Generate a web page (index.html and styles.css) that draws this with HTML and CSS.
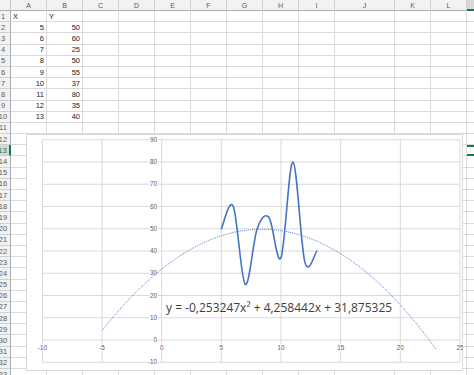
FILE: index.html
```html
<!DOCTYPE html>
<html lang="en">
<head>
  <meta charset="UTF-8" />
  <meta name="viewport" content="width=device-width, initial-scale=1.0"/>
  <title>Sheet1 - chart</title>
  <link rel="stylesheet" href="styles.css">
</head>
<body>
  <div class="sheet">
    <div class="grid" id="grid"></div>

    <div class="chart">
      <svg id="plot" width="437" height="237" viewBox="0 0 437 237">
        <g id="gridlines"></g>
        <g id="labels" class="axis-labels"></g>
        <path id="trend" class="trend" d=""></path>
        <path id="series" class="series" d=""></path>
        <text class="equation" x="140" y="178">y = -0,253247x² + 4,258442x + 31,875325</text>
      </svg>
    </div>
  </div>

  <script>
  const COLS = ["A", "B", "C", "D", "E", "F", "G", "H", "I", "J", "K", "L", "M"];
  const ROWS = 33;
  const data = [[5, 50], [6, 60], [7, 25], [8, 50], [9, 55], [10, 37], [11, 80], [12, 35], [13, 40]];

  // build the sheet cells
  const grid = document.getElementById("grid");
  let html = '<div class="corner"></div>';
  COLS.forEach(c => {
    html += `<div class="col-head${c === "M" ? " active" : ""}">${c}</div>`;
  });
  for (let r = 1; r <= ROWS; r++) {
    html += `<div class="row-head${r === 13 ? " active" : ""}">${r}</div>`;
    COLS.forEach(c => {
      let text = "";
      let cls = "cell";
      if (r === 1 && c === "A") text = "X";
      if (r === 1 && c === "B") text = "Y";
      if (r > 1 && r <= data.length + 1 && c === "A") { text = data[r - 2][0]; cls += " num"; }
      if (r > 1 && r <= data.length + 1 && c === "B") { text = data[r - 2][1]; cls += " num"; }
      if (r === 13 && c === "M") cls += " selected";
      html += `<div class="${cls}">${text}</div>`;
    });
  }
  grid.innerHTML = html;

  // chart scale (chart-local pixels)
  const px = x => 135.7 + 11.93 * x;
  const py = y => 206 - 2.225 * y;

  let lines = "";
  let labels = "";
  for (let x = -10; x <= 25; x += 5) {
    lines += `<line x1="${px(x)}" y1="${py(90)}" x2="${px(x)}" y2="${py(-10)}"/>`;
    labels += `<text x="${px(x)}" y="216" text-anchor="middle">${x}</text>`;
  }
  for (let y = -10; y <= 90; y += 10) {
    lines += `<line x1="${px(-10)}" y1="${py(y)}" x2="${px(25)}" y2="${py(y)}"/>`;
    labels += `<text x="131" y="${py(y) + 2.2}" text-anchor="end">${y}</text>`;
  }
  document.getElementById("gridlines").innerHTML = lines;
  document.getElementById("labels").innerHTML = labels;

  // polynomial trendline
  const trend = x => -0.253247 * x * x + 4.258442 * x + 31.875325;
  let t = "";
  for (let x = -5; x <= 23.001; x += 0.25) {
    t += (t ? " L" : "M") + px(x).toFixed(2) + " " + py(trend(x)).toFixed(2);
  }
  document.getElementById("trend").setAttribute("d", t);

  // smoothed series
  const pts = data.map(([x, y]) => [px(x), py(y)]);
  let d = `M${pts[0][0]} ${pts[0][1]}`;
  for (let i = 0; i < pts.length - 1; i++) {
    const p0 = pts[i - 1] || pts[i];
    const p1 = pts[i];
    const p2 = pts[i + 1];
    const p3 = pts[i + 2] || p2;
    const c1 = [p1[0] + (p2[0] - p0[0]) / 6, p1[1] + (p2[1] - p0[1]) / 6];
    const c2 = [p2[0] - (p3[0] - p1[0]) / 6, p2[1] - (p3[1] - p1[1]) / 6];
    d += ` C${c1[0].toFixed(2)} ${c1[1].toFixed(2)} ${c2[0].toFixed(2)} ${c2[1].toFixed(2)} ${p2[0].toFixed(2)} ${p2[1].toFixed(2)}`;
  }
  document.getElementById("series").setAttribute("d", d);
</script>
</body>
</html>
```

FILE: styles.css
```css
body {
    margin: 0;
    background: #ffffff;
    font-family: "Liberation Sans", Arial, sans-serif;
    overflow: hidden;
}

.sheet {
    position: relative;
    width: 474px;
    height: 375px;
    overflow: hidden;
}

.grid {
    display: grid;
    grid-template-columns: 11px repeat(9, 36px) 60px 36px 36px 60px;
    grid-template-rows: 11px;
    grid-auto-rows: 11.2px;
}

.corner,
.col-head,
.row-head {
    background: #f2f2f2;
    color: #5a5a5a;
    font-size: 7px;
    box-sizing: border-box;
}

.corner {
    border-right: 1px solid #c6c6c6;
    border-bottom: 1px solid #ababab;
}

.col-head {
    display: flex;
    align-items: center;
    justify-content: center;
    border-right: 1px solid #d0d0d0;
    border-bottom: 1px solid #ababab;
}

.col-head.active {
    background: #d9d9d9;
    border-bottom: 2px solid #217346;
}

.row-head {
    display: flex;
    align-items: center;
    justify-content: center;
    padding-right: 4px;
    font-size: 7.5px;
    white-space: nowrap;
    border-right: 1px solid #ababab;
    border-bottom: 1px solid #d0d0d0;
}

.row-head.active {
    background: #d6d6d6;
    color: #217346;
    border-right: 2px solid #217346;
}

.cell {
    display: flex;
    align-items: center;
    padding: 0 2px;
    font-size: 7.5px;
    color: #222222;
    box-sizing: border-box;
    border-right: 1px solid #dadada;
    border-bottom: 1px solid #dadada;
}

.cell.num {
    justify-content: flex-end;
}

.cell.selected {
    border-top: 2px solid #217346;
    border-bottom: 2px solid #217346;
}

/* chart floats over the cells */
.chart {
    position: absolute;
    left: 26px;
    top: 134px;
    width: 437px;
    height: 237px;
    background: #ffffff;
    border: 1px solid #d9d9d9;
    box-sizing: border-box;
}

.chart svg {
    display: block;
    position: absolute;
    left: -1px;
    top: -1px;
}

#gridlines line {
    stroke: #d9d9d9;
    stroke-width: 1;
}

.axis-labels text {
    font-family: "Liberation Sans", Arial, sans-serif;
    font-size: 6.3px;
    fill: #595959;
    stroke: #ffffff;
    stroke-width: 2px;
    paint-order: stroke;
}

.trend {
    fill: none;
    stroke: #4472c4;
    stroke-width: 0.9;
    stroke-dasharray: 1 1;
}

.series {
    fill: none;
    stroke: #4472c4;
    stroke-width: 1.6;
    stroke-linecap: round;
    stroke-linejoin: round;
}

.equation {
    font-family: "Open Sans", sans-serif;
    font-size: 12px;
    fill: #404040;
}
```
